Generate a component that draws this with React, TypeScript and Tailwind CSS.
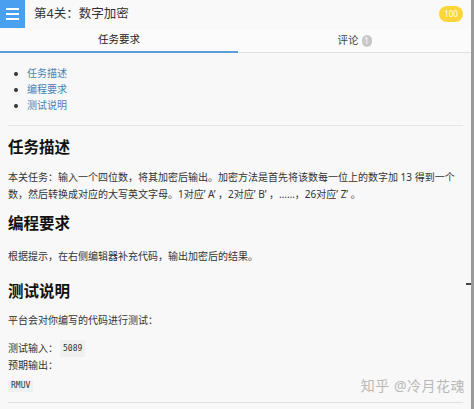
import React from "react";

export default function App() {
  const font = { fontFamily: '"Noto Sans", "Noto Sans CJK SC", sans-serif' };
  const mono = { fontFamily: '"DejaVu Sans Mono", monospace' };
  return (
    <div className="relative w-[474px] h-[409px] overflow-hidden bg-[#f8f8f8] text-[#333]" style={font}>
      <div className="flex h-full">
        <div className="flex-1 flex flex-col min-w-0">
          {/* header */}
          <div className="flex items-center h-[28px] bg-[#f9f9f9]">
            <div className="w-[25px] h-[28px] bg-[#4aa0f0] flex flex-col items-center justify-center gap-[3px]">
              <div className="w-[13px] h-[2px] bg-white" />
              <div className="w-[13px] h-[2px] bg-white" />
              <div className="w-[13px] h-[2px] bg-white" />
            </div>
            <div className="ml-[9px] text-[12.5px] text-[#333] leading-none">第4关：数字加密</div>
            <div className="ml-auto mr-[8px] w-[24px] h-[16px] rounded-full bg-[#fcd53a] text-white text-[8px] flex items-center justify-center">100</div>
          </div>
          {/* tabs */}
          <div className="flex h-[24px] mt-[1px] bg-[#fbfbfb]">
            <div className="w-[238px] flex items-center justify-center text-[10.5px] text-[#222] border-b-2 border-[#5b9fd6]">任务要求</div>
            <div className="flex-1 flex items-center justify-center gap-[3px] text-[10.5px] text-[#444] border-b border-[#e0e0e0]">
              <span>评论</span>
              <span className="w-[10px] h-[12px] rounded-full bg-[#c8c8c8] text-white text-[8px] flex items-center justify-center">1</span>
            </div>
          </div>
          {/* content */}
          <div className="px-[8px] flex-1">
            <ul className="mt-[13px] ml-[6px] flex flex-col gap-[1px] text-[10px] leading-[15px] text-[#4a7fb5]">
              {["任务描述", "编程要求", "测试说明"].map((t) => (
                <li key={t} className="flex items-center gap-[9px]">
                  <span className="w-[4px] h-[4px] rounded-full bg-[#333]" />
                  <span>{t}</span>
                </li>
              ))}
            </ul>
            <div className="mt-[12px] border-t border-[#e6e6e6]" />
            <h2 className="mt-[9px] text-[15.5px] font-bold text-[#111] leading-[24px]">任务描述</h2>
            <p className="mt-[10px] text-[10px] leading-[17px] text-[#333] whitespace-nowrap">
              本关任务：输入一个四位数，将其加密后输出。加密方法是首先将该数每一位上的数字加 13 得到一个
              <br />
              数，然后转换成对应的大写英文字母。1对应’ A’ ，2对应’ B’ ，……，26对应’ Z’ 。
            </p>
            <h2 className="mt-[8px] text-[15.5px] font-bold text-[#111] leading-[24px]">编程要求</h2>
            <p className="mt-[13px] text-[10px] leading-[17px] text-[#333]">根据提示，在右侧编辑器补充代码，输出加密后的结果。</p>
            <h2 className="mt-[14px] text-[15.5px] font-bold text-[#111] leading-[24px]">测试说明</h2>
            <p className="mt-[9px] text-[10px] leading-[17px] text-[#333]">平台会对你编写的代码进行测试：</p>
            <p className="mt-[11px] text-[10px] leading-[17px] text-[#333] flex items-center">
              测试输入：
              <code className="ml-[2px] px-[3px] bg-[#f0f0f0] text-[8px] text-[#333]" style={mono}>5089</code>
            </p>
            <p className="text-[10px] leading-[17px] text-[#333]">预期输出：</p>
            <div className="mt-[1px] flex items-center justify-between">
              <code className="px-[3px] bg-[#f0f0f0] text-[8px] text-[#333]" style={mono}>RMUV</code>
              <span className="mr-[-2px] text-[14px] text-[#b8b8b8] tracking-[0.5px]">知乎 @冷月花魂</span>
            </div>
            <div className="mt-[6px] border-t border-[#e0e0e0]" />
          </div>
        </div>
        <div className="w-[3px] h-full bg-[#9a9a9a]" />
      </div>
      <div className="absolute left-[466px] top-[283px] w-[5px] h-[2px] bg-[#444]" />
    </div>
  );
}
